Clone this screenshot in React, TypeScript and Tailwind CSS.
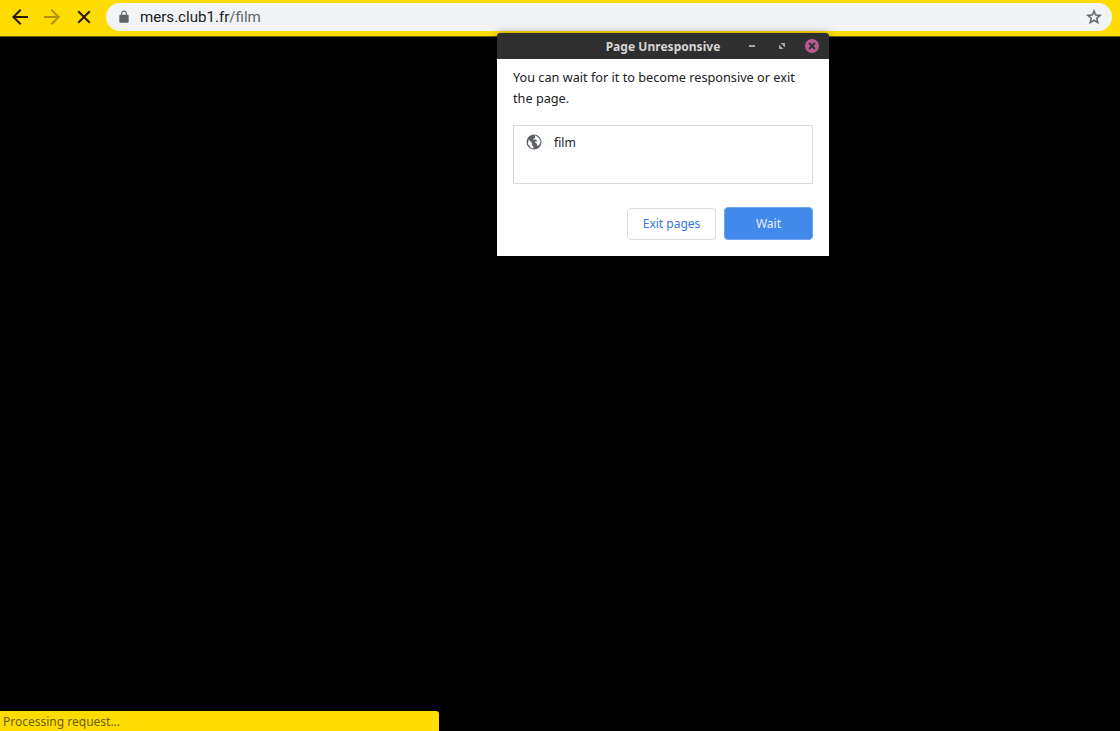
export default function App() {
  return (
    <div className="relative flex h-[731px] w-[1120px] flex-col overflow-hidden bg-black font-['Noto_Sans',sans-serif]">
      <header className="flex h-[37px] w-full items-center border-b border-[#6b5c00] bg-[#ffdc00] pb-[2px] pl-[8px] pr-[8px]">
        <div className="flex w-[98px] items-center">
          <svg className="h-[24px] w-[24px]" viewBox="0 0 24 24" fill="#2a1a0a">
            <path d="M20 11H7.830l5.590-5.590L12 4l-8 8 8 8 1.410-1.410L7.830 13H20v-2z" />
          </svg>
          <svg className="ml-[8px] h-[24px] w-[24px]" viewBox="0 0 24 24" fill="#b08f14">
            <path d="M12 4l-1.410 1.410L16.170 11H4v2h12.170l-5.580 5.590L12 20l8-8z" />
          </svg>
          <svg className="ml-[8px] h-[24px] w-[24px]" viewBox="0 0 24 24" fill="#2a1a0a">
            <path d="M18.500 6.910L17.090 5.500 12 10.590 6.910 5.500 5.500 6.910 10.590 12 5.500 17.090 6.910 18.500 12 13.410 17.090 18.500 18.500 17.090 13.410 12z" />
          </svg>
        </div>
        <div className="flex h-[28px] flex-1 items-center rounded-full bg-[#f1f3f4] pl-[11px] pr-[10px]">
          <svg className="h-[14px] w-[14px]" viewBox="0 0 24 24" fill="#5f6368">
            <path d="M18 8h-1V6c0-2.760-2.240-5-5-5S7 3.240 7 6v2H6c-1.100 0-2 .9-2 2v10c0 1.100.9 2 2 2h12c1.100 0 2-.9 2-2V10c0-1.100-.9-2-2-2zM9 8V6c0-1.660 1.340-3 3-3s3 1.340 3 3v2H9z" />
          </svg>
          <span className="ml-[9px] flex-1 font-['Roboto',sans-serif] text-[15.1px] text-[#202124]">
            mers.club1.fr<span className="text-[#5f6368]">/film</span>
          </span>
          <svg className="mr-[-1px] h-[18px] w-[18px]" viewBox="0 0 24 24" fill="#5f6368" stroke="#5f6368" strokeWidth="0.500">
            <path d="M22 9.240l-7.190-.620L12 2 9.190 8.630 2 9.240l5.460 4.730L5.820 21 12 17.270 18.180 21l-1.630-7.030L22 9.240zM12 15.400l-3.760 2.270 1-4.280-3.320-2.880 4.380-.380L12 6.100l1.710 4.040 4.380.380-3.320 2.880 1 4.280L12 15.400z" />
          </svg>
        </div>
      </header>

      <div className="absolute left-[497px] top-[33px] flex w-[332px] flex-col shadow-[0_0_8px_rgba(0,0,0,0.35)]">
        <div className="relative flex h-[26px] items-center justify-center rounded-t-[3px] bg-[#2f2f2f] pt-[2px]">
          <span className="tracking-[0.03px] text-[12px] font-bold text-[#d6d6d6]">Page Unresponsive</span>
          <div className="absolute left-[252px] top-[12px] h-[2px] w-[6px] bg-[#a8a8a8]" />
          <svg className="absolute left-[282px] top-[10px] h-[6px] w-[6px]" viewBox="0 0 6 6" fill="#a8a8a8">
            <path d="M1.500 0H6v4.500zM0 1.500L4.500 6H0z" />
          </svg>
          <div className="absolute left-[308px] top-[6px] flex h-[14px] w-[14px] items-center justify-center rounded-full bg-[#b85c92]">
            <svg className="h-[8px] w-[8px]" viewBox="0 0 8 8" stroke="#2f2f2f" strokeWidth="1.800">
              <path d="M1 1l6 6M7 1L1 7" />
            </svg>
          </div>
        </div>
        <div className="flex h-[197px] flex-col bg-white px-[16px] pt-[8px]">
          <p className="text-[12.700px] leading-[21px] text-[#202124]">You can wait for it to become responsive or exit the page.</p>
          <div className="mt-[16px] flex h-[59px] items-start border border-[#d9d9d9] pl-[12px] pt-[8px]">
            <svg className="h-[16px] w-[16px]" viewBox="0 0 16 16">
              <circle cx="8" cy="8" r="7.500" fill="#5f6368" />
              <path d="M2.500 5.500L6 9v2.200l1.500 1.500v1.800L5 14l-3-4zM9 1.200V4L6.500 5.500H10L11.500 7.500H8.500L11 10v2l2.500-1.500 1-3-1.500-3.500z" fill="#ffffff" />
            </svg>
            <span className="ml-[12px] text-[12.200px] leading-[17px] text-[#202124]">film</span>
          </div>
          <div className="mt-[23px] flex items-start justify-end gap-[8px]">
            <button className="mt-[1px] flex h-[32px] w-[89px] items-center justify-center rounded-[4px] border border-[#dadce0] bg-white text-[12px] text-[#3276e6]">Exit pages</button>
            <button className="flex h-[33px] w-[89px] items-center justify-center rounded-[4px] border border-[#6fa5f0] bg-[#4189eb] text-[12px] text-[#e8f0fe]">Wait</button>
          </div>
        </div>
      </div>

      <div className="absolute bottom-0 left-0 flex h-[20px] w-[439px] items-center rounded-tr-[3px] bg-[#ffdc00] pl-[3px] pt-[1px] text-[12px] text-[#6b5f10]">
        Processing request...
      </div>
    </div>
  );
}
